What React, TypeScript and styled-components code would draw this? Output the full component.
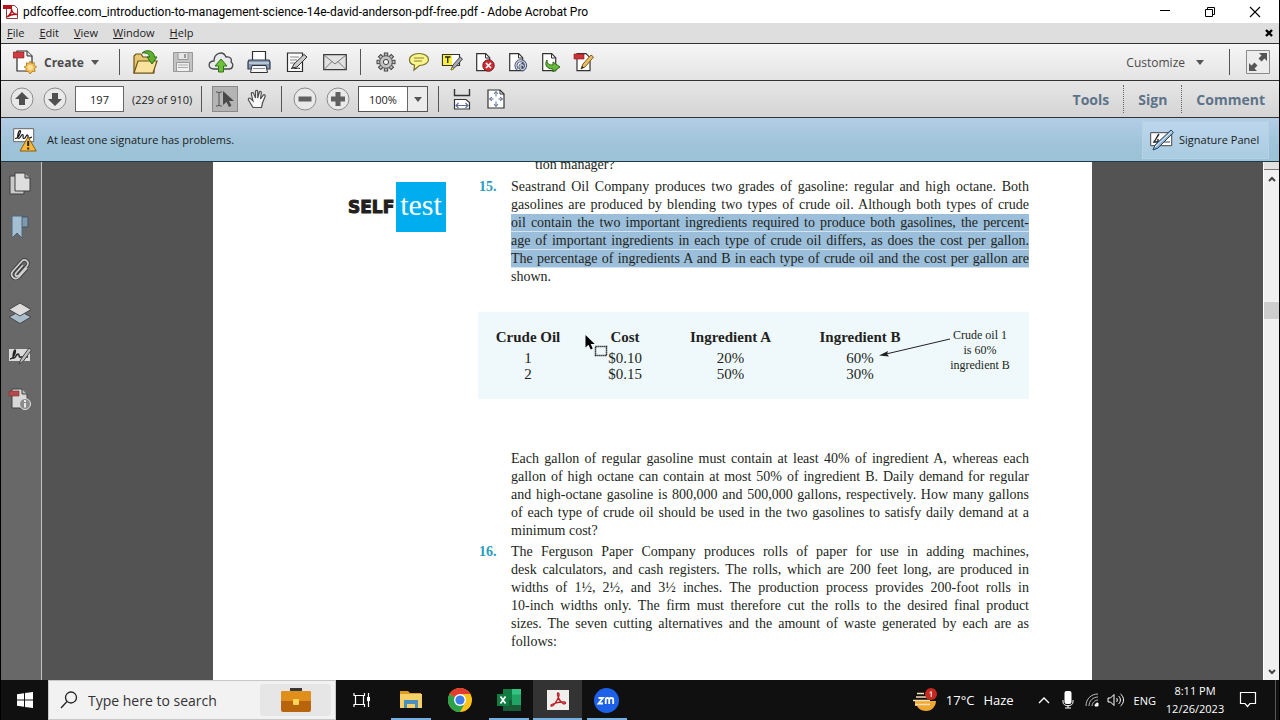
import React from "react";
import styled, { createGlobalStyle } from "styled-components";

const menus = ["File", "Edit", "View", "Window", "Help"];

const problem15 = [
  { text: "Seastrand Oil Company produces two grades of gasoline: regular and high octane. Both" },
  { text: "gasolines are produced by blending two types of crude oil. Although both types of crude" },
  { text: "oil contain the two important ingredients required to produce both gasolines, the percent-", selected: true },
  { text: "age of important ingredients in each type of crude oil differs, as does the cost per gallon.", selected: true },
  { text: "The percentage of ingredients A and B in each type of crude oil and the cost per gallon are", selected: true },
  { text: "shown.", last: true },
];

const problem15Question = [
  { text: "Each gallon of regular gasoline must contain at least 40% of ingredient A, whereas each" },
  { text: "gallon of high octane can contain at most 50% of ingredient B. Daily demand for regular" },
  { text: "and high-octane gasoline is 800,000 and 500,000 gallons, respectively. How many gallons" },
  { text: "of each type of crude oil should be used in the two gasolines to satisfy daily demand at a" },
  { text: "minimum cost?", last: true },
];

const problem16 = [
  { text: "The Ferguson Paper Company produces rolls of paper for use in adding machines," },
  { text: "desk calculators, and cash registers. The rolls, which are 200 feet long, are produced in" },
  { text: "widths of 1½, 2½, and 3½ inches. The production process provides 200-foot rolls in" },
  { text: "10-inch widths only. The firm must therefore cut the rolls to the desired final product" },
  { text: "sizes. The seven cutting alternatives and the amount of waste generated by each are as" },
  { text: "follows:", last: true },
];

const crudeOils = [
  ["1", "$0.10", "20%", "60%"],
  ["2", "$0.15", "50%", "30%"],
];

type LineData = { text: string; selected?: boolean; last?: boolean };

const Lines = ({ lines }: { lines: LineData[] }) => (
  <Paragraph>
    {lines.map((line) => (
      <Line key={line.text} $selected={line.selected} $last={line.last}>
        {line.text}{" "}
      </Line>
    ))}
  </Paragraph>
);

/* ---------- icons ---------- */

const PdfIcon = () => (
  <svg width="16" height="16" viewBox="0 0 16 16">
    <path d="M3.500 1.500h8l3 3v10h-11z" fill="#fff" stroke="#8a3a3a" />
    <path d="M0 1h9v4H0z" fill="#b5121b" />
    <path d="M4 13c3-2 5-5 4.500-8 0 3 3 6 6 5.500-4-.5-7 0-10.500 2.500z" fill="none" stroke="#b5121b" strokeWidth="1.500" />
  </svg>
);

const CreateIcon = () => (
  <svg width="24" height="24" viewBox="0 0 24 24">
    <path d="M4 1h10l5 5v15H4z" fill="#fff" stroke="#2b2b2b" strokeWidth="1.200" />
    <path d="M14 1v5h5" fill="#ddd" stroke="#2b2b2b" />
    <path d="M0 2h11v6H0z" fill="#cf3b40" stroke="#8d1c20" strokeWidth=".6" />
    <path d="M17 11l1.600 2.300 2.800-.6-.3 2.800 2.500 1.300-2.200 1.800.8 2.700-2.800.1L17 24l-1.700-2.500-2.800-.1.800-2.700-2.200-1.800 2.500-1.300-.3-2.800 2.800.6z" fill="#f3c15a" stroke="#a8741a" strokeWidth=".8" />
    <circle cx="17.200" cy="17.300" r="2.600" fill="#fbe09a" />
  </svg>
);

const FolderIcon = () => (
  <svg width="26" height="26" viewBox="0 0 26 26">
    <path d="M2 24V7l2-2h5l2 3h11v16z" fill="#e8c973" stroke="#6d5216" strokeWidth="1.200" />
    <path d="M2 24l4-12h19l-4 12z" fill="#f8e29c" stroke="#6d5216" strokeWidth="1.200" />
    <path d="M10 4c4-4 12-3 12.500 4H25l-5 7-5-7h2.500c0-3-3-4.500-7.500-4z" fill="#5eb130" stroke="#2f6b12" />
  </svg>
);

const SaveIcon = () => (
  <svg width="22" height="22" viewBox="0 0 22 22">
    <path d="M1.500 1.500h19v19h-19z" fill="#c4c4c4" stroke="#999" />
    <path d="M6 1.500h10v7H6z" fill="#e6e6e6" stroke="#999" />
    <path d="M12 3h2v4h-2z" fill="#999" />
    <path d="M4.500 11.500h13v9h-13z" fill="#efefef" stroke="#999" />
    <path d="M6 14h10M6 16.500h10" stroke="#aaa" />
  </svg>
);

const CloudIcon = () => (
  <svg width="26" height="24" viewBox="0 0 26 24">
    <path d="M6 19c-7 0-6-8 0-8C6 3 15 0 18 7c5-1 6 3 5 5 3 2 2 7-2 7z" fill="#e8eaec" stroke="#45494d" strokeWidth="1.300" />
    <path d="M13 9l6 7h-3.500v6h-5v-6H7z" fill="#6cc03a" stroke="#32731a" />
  </svg>
);

const PrinterIcon = () => (
  <svg width="24" height="24" viewBox="0 0 24 24">
    <path d="M5.500 1.500h13v10h-13z" fill="#fff" stroke="#303236" strokeWidth="1.200" />
    <path d="M2 10h20l1 2v7H1v-7z" fill="#8597ae" stroke="#2f3d50" strokeWidth="1.200" />
    <path d="M2 12h20v2H2z" fill="#b9c6d6" />
    <path d="M5 15.500h14l1.500 7h-17z" fill="#f5f5f5" stroke="#303236" />
    <path d="M6 18.500h12" stroke="#8a8d92" />
  </svg>
);

const EditPageIcon = () => (
  <svg width="22" height="22" viewBox="0 0 22 22">
    <path d="M1.500 2h15v18.500h-15z" fill="#fbfbfb" stroke="#2c2c2c" strokeWidth="1.200" />
    <path d="M4 6h9M4 9h7M4 12h5" stroke="#888" />
    <path d="M6 17l2-4L18 3.500l3 2.500L11 16z" fill="#ccc" stroke="#333" />
    <path d="M5 17.500c2-1 3 .5 5 0s2-.5 4 0" fill="none" stroke="#222" />
  </svg>
);

const MailIcon = () => (
  <svg width="24" height="18" viewBox="0 0 24 18">
    <path d="M.7 1.700h22.600v15H.7z" fill="#e2e2e2" stroke="#3b3b3b" strokeWidth="1.200" />
    <path d="M1 2l11 9L23 2M1 16.500l8-8M23 16.500l-8-8" fill="none" stroke="#777" />
  </svg>
);

const GearIcon = () => (
  <svg width="20" height="20" viewBox="0 0 20 20">
    <g stroke="#444" fill="#bbb">
      {[0, 45, 90, 135].map((a) => (
        <rect key={a} x="8.300" y="1" width="3.400" height="18" transform={`rotate(${a} 10 10)`} />
      ))}
    </g>
    <circle cx="10" cy="10" r="6.300" fill="#c4c4c4" stroke="#555" />
    <circle cx="10" cy="10" r="2.600" fill="#f4f4f4" stroke="#444" />
  </svg>
);

const CommentIcon = () => (
  <svg width="22" height="20" viewBox="0 0 22 20">
    <path d="M11 1.500c5.500 0 9.500 2.500 9.500 6s-4 6-9 6L6 18l.5-5C3 12.500 1.500 10 1.500 7.500c0-3.500 4-6 9.500-6z" fill="#fbf38c" stroke="#75702a" strokeWidth="1.200" />
    <path d="M6 6h10M6 9h8" stroke="#888238" />
  </svg>
);

const HighlightIcon = () => (
  <svg width="22" height="20" viewBox="0 0 22 20">
    <path d="M1.500 2.500h17v11h-17z" fill="#fff" stroke="#333" strokeWidth="1.200" />
    <path d="M2 3h9v10H2z" fill="#fbf03b" />
    <path d="M4 5h5.500M6.750 5v6" stroke="#222" strokeWidth="1.300" />
    <path d="M10 18l2-5 7-8 2.500 2-7 8z" fill="#a7aab0" stroke="#444" />
    <path d="M10 18l1-3 2 2z" fill="#f6ea2e" stroke="#6b6512" strokeWidth=".6" />
  </svg>
);

const sheet = <path d="M1.700 1.700h9l4 4v13h-13z" fill="#fff" stroke="#333" strokeWidth="1.200" />;
const sheetFold = <path d="M10.500 2v4h4" fill="none" stroke="#333" />;

const DeletePageIcon = () => (
  <svg width="20" height="20" viewBox="0 0 20 20">
    {sheet}
    {sheetFold}
    <circle cx="13.500" cy="13.500" r="5.700" fill="#cc2f35" stroke="#7c1216" />
    <path d="M11 11l5 5M16 11l-5 5" stroke="#fff" strokeWidth="1.700" />
  </svg>
);

const AttachPageIcon = () => (
  <svg width="20" height="20" viewBox="0 0 20 20" fill="none">
    {sheet}
    {sheetFold}
    <path d="M9.500 17.500c-4-6 1-9.500 4.500-8.500s5 5 2 8c-2 1.500-4 0-4-2s1.500-3 3-1.500" stroke="#48536e" strokeWidth="3" />
    <path d="M9.500 17.500c-4-6 1-9.500 4.500-8.500s5 5 2 8c-2 1.500-4 0-4-2s1.500-3 3-1.500" stroke="#c8d1e4" strokeWidth="1.300" />
  </svg>
);

const ExportPageIcon = () => (
  <svg width="20" height="20" viewBox="0 0 20 20">
    {sheet}
    {sheetFold}
    <path d="M6 8c0 4 2 5 6 5v-3l7 5-7 5v-3c-6 0-9-4-6-9z" fill="#67b83b" stroke="#2c6815" />
  </svg>
);

const EditPdfIcon = () => (
  <svg width="22" height="20" viewBox="0 0 22 20">
    <path d="M4 1.700h9l4 4v13H4z" fill="#fff" stroke="#333" strokeWidth="1.200" />
    <path d="M1 2h10v5H1z" fill="#cc3137" stroke="#86181c" strokeWidth=".6" />
    <path d="M8 17l2-5 8-9 2.500 2-8 9.500z" fill="#eebf62" stroke="#7c5a20" />
    <path d="M8 17l1-3 2 1.500z" fill="#222" />
  </svg>
);

const RoundIcon = ({ kind }: { kind: "up" | "down" | "minus" | "plus" }) => (
  <svg width="24" height="24" viewBox="0 0 24 24">
    <circle cx="12" cy="12" r="11" fill="#e9e9e9" stroke="#8c8c8c" />
    {kind === "up" && <path d="M12 5l7 7h-4v6H9v-6H5z" fill="#505050" />}
    {kind === "down" && <path d="M12 19l7-7h-4V6H9v6H5z" fill="#505050" />}
    {kind === "minus" && <path d="M5.500 9.500h13v5h-13z" fill="#606060" />}
    {kind === "plus" && <path d="M9.500 5h5v4.500H19v5h-4.500V19h-5v-4.500H5v-5h4.500z" fill="#606060" />}
  </svg>
);

const SelectToolIcon = () => (
  <svg width="20" height="18" viewBox="0 0 20 18">
    <path d="M1 2h2l1 1 1-1h2M4 3v12M1 16h2l1-1 1 1h2" fill="none" stroke="#555" />
    <path d="M8 1v14l3.500-3 2.500 5 2.500-1.300-2.500-4.700H19z" fill="#4a4a4a" />
  </svg>
);

const HandIcon = () => (
  <svg width="20" height="20" viewBox="0 0 20 20">
    <path
      d="M6 18.500L1.500 11c-.5-1.500 1-2.500 2-1.300L6 12 4.300 5c-.2-1.600 1.700-2 2.200-.6L8.500 9V2.500c0-1.500 2.200-1.500 2.200 0V9l1.600-5.700c.5-1.300 2.200-1 2 .6L13.500 10l2.700-3.800c1-1 2.500-.2 1.900 1.300L15.500 14l-1 4.500z"
      fill="#fafafa"
      stroke="#505050"
      strokeWidth="1.200"
    />
  </svg>
);

const FitWidthIcon = () => (
  <svg width="18" height="22" viewBox="0 0 18 22">
    <path d="M1.500 1v6.500h15V1" fill="none" stroke="#333" strokeWidth="1.400" />
    <path d="M1.500 21V11.500H13l3.500 3V21z" fill="#fff" stroke="#333" strokeWidth="1.200" />
    <path d="M3 17.500h12M5.500 15L3 17.500 5.500 20M12.500 15l2.500 2.500-2.500 2.500" fill="none" stroke="#5b6a96" strokeWidth="1.200" />
  </svg>
);

const FitPageIcon = () => (
  <svg width="18" height="20" viewBox="0 0 18 20">
    <path d="M1 1h12l4 4v14H1z" fill="#fff" stroke="#333" strokeWidth="1.200" />
    <path d="M13 1v4h4" fill="none" stroke="#333" />
    <path d="M9 2.500v5M9 12.500v5M2.500 10h4M11.500 10h4M7 5l2-2.500L11 5M7 15l2 2.500 2-2.500M5 8l-2.500 2L5 12M13 8l2.500 2-2.500 2" fill="none" stroke="#5b6a96" />
  </svg>
);

const ExpandIcon = () => (
  <svg width="24" height="24" viewBox="0 0 24 24">
    <path d="M.5.5h23v23H.5z" fill="#ececec" stroke="#8b8b8b" />
    <path d="M13 3h8v8l-2.500-2.500-3 3-3-3 3-3zM11 21H3v-8l2.500 2.500 3-3 3 3-3 3z" fill="#555" />
  </svg>
);

const SignatureWarnIcon = () => (
  <svg width="24" height="24" viewBox="0 0 24 24">
    <path d="M.7.700h20v13H.7z" fill="#fff" stroke="#666" />
    <path d="M2 10.500c4 0 6.500-8 5-8s-3.500 8-1.500 8 2.500-4 4-4-.5 4 1.500 4 2-4 3.500-3.500-.5 3 1.500 3 1.500-1 3-1" fill="none" stroke="#111" strokeWidth="1.200" />
    <path d="M15 9l8.300 14H7z" fill="#f6b93b" stroke="#8c5c0b" />
    <path d="M15.200 13v5M15.200 19.500v2" stroke="#222" strokeWidth="2" />
  </svg>
);

const SignaturePanelIcon = () => (
  <svg width="24" height="22" viewBox="0 0 24 22">
    <path d="M.7 3.700h21v13H.7z" fill="#fff" stroke="#444" />
    <path d="M9 5c-2 3-3 5-5 8h4v-3" fill="none" stroke="#222" strokeWidth="1.400" />
    <path d="M12 13h8" stroke="#444" />
    <path d="M3 21l2-5L21 1l2.500 2.500L8 19z" fill="#8fb2d0" stroke="#28435f" />
    <path d="M5 18L22 2.500" stroke="#eef5fb" />
  </svg>
);

const PagesIcon = () => (
  <svg width="22" height="24" viewBox="0 0 22 24">
    <path d="M1 4h14v18H1z" fill="#c9c9c9" stroke="#3f3f3f" />
    <path d="M6 1h10l5 5v13H6z" fill="#dedede" stroke="#3f3f3f" />
    <path d="M16 1v5h5" fill="#aaa" stroke="#3f3f3f" />
  </svg>
);

const BookmarkIcon = () => (
  <svg width="20" height="24" viewBox="0 0 20 24">
    <path d="M7 2h11v10H7z" fill="#7e99ae" stroke="#435566" />
    <path d="M2 1h10v22l-5-5-5 5z" fill="#a5bfd2" stroke="#4e6476" />
  </svg>
);

const ClipIcon = () => (
  <svg width="22" height="24" viewBox="0 0 22 24" fill="none">
    <path d="M14 7L7 15c-2 3 1 4 3 2l8-9c3-4-2-8-5-5l-9 10c-4 5 2 10 6 6l8-9" stroke="#414141" strokeWidth="3.500" />
    <path d="M14 7L7 15c-2 3 1 4 3 2l8-9c3-4-2-8-5-5l-9 10c-4 5 2 10 6 6l8-9" stroke="#cfcfcf" strokeWidth="1.700" />
  </svg>
);

const LayersIcon = () => (
  <svg width="24" height="22" viewBox="0 0 24 22">
    <path d="M12 9l11 6-11 6.500L1 15z" fill="#a9bcc9" stroke="#484848" />
    <path d="M12 1l11 6.500L12 14 1 7.500z" fill="#dcdcdc" stroke="#484848" />
  </svg>
);

const SignaturesIcon = () => (
  <svg width="24" height="20" viewBox="0 0 24 20">
    <path d="M1 3h21v12H1z" fill="#dadada" />
    <path d="M2 13c5-1 6-9 5-9s-3 8-1 8 2-4 4-4 0 4 3 3h7" fill="none" stroke="#222" strokeWidth="1.500" />
    <path d="M11 18l2-5 8-11 2.500 2-8 11z" fill="#bcbcbc" stroke="#444" />
  </svg>
);

const PdfInfoIcon = () => (
  <svg width="24" height="24" viewBox="0 0 24 24">
    <path d="M4 2h10l5 5v14H4z" fill="#d8d8d8" stroke="#414141" />
    <path d="M14 2v5h5" fill="#bbb" stroke="#414141" />
    <path d="M1 4h10v5H1z" fill="#b44a4a" stroke="#733" strokeWidth=".6" />
    <circle cx="17" cy="17" r="5.500" fill="#8b8b8b" stroke="#e0e0e0" />
    <path d="M17 13v2M17 16v4.500" stroke="#fff" strokeWidth="1.600" />
  </svg>
);

const Caret = () => (
  <svg width="8" height="5" viewBox="0 0 8 5">
    <path d="M0 0h8L4 5z" fill="#555" />
  </svg>
);

const MinimizeIcon = () => (
  <svg width="12" height="12" viewBox="0 0 12 12">
    <path d="M1 4.500h10" stroke="#000" />
  </svg>
);

const RestoreIcon = () => (
  <svg width="12" height="12" viewBox="0 0 12 12" fill="none" stroke="#000">
    <path d="M1.500 3.500h7v7h-7zM3.500 3V1.500h7v7H9" />
  </svg>
);

const CloseIcon = () => (
  <svg width="12" height="12" viewBox="0 0 12 12">
    <path d="M1 1l10 10M11 1L1 11" stroke="#000" strokeWidth="1.100" />
  </svg>
);

const CloseDocIcon = () => (
  <svg width="8" height="8" viewBox="0 0 8 8">
    <path d="M1 1l6 6M7 1L1 7" stroke="#000" strokeWidth="2.400" />
  </svg>
);

const WindowsIcon = () => (
  <svg width="16" height="16" viewBox="0 0 16 16" fill="#fff">
    <path d="M0 2.200l7-1v6.300H0zM8 1l8-1v7.500H8zM0 8.500h7v6.300l-7-1zM8 8.500h8V16l-8-1z" />
  </svg>
);

const SearchIcon = () => (
  <svg width="18" height="18" viewBox="0 0 18 18" fill="none" stroke="#222" strokeWidth="1.300">
    <circle cx="11" cy="6.500" r="5.500" />
    <path d="M7 10.500L1 17" />
  </svg>
);

const BriefcaseIcon = () => (
  <svg width="32" height="26" viewBox="0 0 32 26">
    <path d="M11.500 5V2.500h9V5" fill="none" stroke="#3a3a3a" strokeWidth="3" />
    <rect x="1" y="4" width="30" height="21" rx="2" fill="#b8640c" />
    <path d="M1 6c0-1 1-2 2-2h26c1 0 2 1 2 2v8H1z" fill="#e08f1c" />
    <rect x="13" y="12" width="6" height="6" rx="1" fill="#fcd45c" />
  </svg>
);

const TaskViewIcon = () => (
  <svg width="18" height="16" viewBox="0 0 18 16" fill="none" stroke="#fff" strokeWidth="1.200">
    <path d="M1 1v2.500h10.500V1M1 15v-2.500h10.500V15M2.500 3.500v9M10.500 3.500v9M15.500 1v14" />
    <path d="M14 5h3v4h-3z" fill="#fff" stroke="none" />
  </svg>
);

const ExplorerIcon = () => (
  <svg width="22" height="20" viewBox="0 0 22 20">
    <path d="M0 1h8l2 2h11v5H0z" fill="#dc9d1c" />
    <path d="M0 4h22v14H0z" fill="#f5cf68" />
    <path d="M4 10h14v8h-3v-4H7v4H4z" fill="#4c8fbd" />
  </svg>
);

const ChromeIcon = () => (
  <svg width="24" height="24" viewBox="0 0 24 24">
    <circle cx="12" cy="12" r="12" fill="#fbc116" />
    <path d="M12 12L1.600 6A12 12 0 0 0 12 24l5-9z" fill="#2da24c" />
    <path d="M12 12L1.600 6A12 12 0 0 1 22.400 6H12z" fill="#e33b2e" />
    <circle cx="12" cy="12" r="6" fill="#fff" />
    <circle cx="12" cy="12" r="4.600" fill="#3f7de8" />
  </svg>
);

const ExcelIcon = () => (
  <svg width="24" height="22" viewBox="0 0 24 22">
    <path d="M6 0h18v22H6z" fill="#21a366" />
    <path d="M6 0h9v11H6z" fill="#107c41" />
    <path d="M15 0h9v5.500h-9z" fill="#33c481" />
    <path d="M6 11h9v5H6zM6 16h18v6H6z" fill="#185c37" />
    <path d="M0 5h12v12H0z" fill="#107c41" />
    <path d="M3.500 7.500l5 7M8.500 7.500l-5 7" stroke="#fff" strokeWidth="1.700" />
  </svg>
);

const AcrobatIcon = () => (
  <svg width="22" height="20" viewBox="0 0 22 20">
    <path d="M0 0h22v20H0z" fill="#f1eeee" />
    <path d="M4 16c-1-2 7-4 13-4 3 0 1 3-1 1.500C12 11 10 5 10.500 3.500s2 0 1.500 2C11 10 6 17 4 16z" fill="none" stroke="#b81a20" strokeWidth="1.300" />
  </svg>
);

const ZoomIcon = () => (
  <svg width="25" height="25" viewBox="0 0 25 25">
    <circle cx="12.500" cy="12.500" r="12.500" fill="#1d61e8" />
    <path d="M4.500 10h4.500l-4.500 5.500H9M11.700 16v-4.500c0-2 3.500-2 3.500 0V16v-4.500c0-2 4-2 4 0V16" fill="none" stroke="#fff" strokeWidth="1.800" />
  </svg>
);

const HazeIcon = () => (
  <svg width="24" height="24" viewBox="0 0 24 24">
    <path d="M2 13h21c0 5-4 10-10 10-5 0-8-3-9-5h-2z" fill="#f0a732" />
    <path d="M4 5.500h7M3 9h11M0 12.500h17M2 16.500h15" stroke="#f5ddb4" strokeWidth="1.500" />
    <circle cx="18" cy="6" r="6" fill="#c4281f" />
    <path d="M16.500 5l1.700-1.500V9" fill="none" stroke="#fff" />
  </svg>
);

const ChevronUpIcon = () => (
  <svg width="12" height="8" viewBox="0 0 12 8">
    <path d="M1 7l5-5 5 5" fill="none" stroke="#fff" strokeWidth="1.300" />
  </svg>
);

const MicIcon = () => (
  <svg width="12" height="18" viewBox="0 0 12 18">
    <rect x="2.500" y="0" width="7" height="13" rx="2" fill="#fff" />
    <path d="M1 9v2c0 5 10 5 10 0V9M6 14v3M3 17h6" fill="none" stroke="#fff" />
  </svg>
);

const WifiIcon = () => (
  <svg width="14" height="14" viewBox="0 0 14 14" fill="none" stroke="#bbb">
    <path d="M1 13C1 6 6 1 13 1M4 13c0-5 4-9 9-9M7 13c0-3 3-6 6-6" />
    <path d="M10 13c0-2 1-3 3-3v3z" fill="#fff" stroke="#fff" />
  </svg>
);

const SoundIcon = () => (
  <svg width="18" height="14" viewBox="0 0 18 14" fill="none" stroke="#fff">
    <path d="M1 5h2.500L7 1.500v11L3.500 9H1zM9.500 5c1 1 1 3 0 4M11.500 3c2.500 2 2.500 6 0 8M13.500 1c4 3 4 9 0 12" />
  </svg>
);

const NoticeIcon = () => (
  <svg width="18" height="18" viewBox="0 0 18 18">
    <path d="M1.500 1.500h15v11H11l-2.500 3-2.500-3H1.500z" fill="none" stroke="#fff" strokeWidth="1.200" />
  </svg>
);

const ScrollChevron = ({ down }: { down?: boolean }) => (
  <svg width="8" height="6" viewBox="0 0 8 6">
    <path d={down ? "M1 1l3 3 3-3" : "M1 5l3-3 3 3"} fill="none" stroke="#444" strokeWidth="2" />
  </svg>
);

/* ---------- page ---------- */

const App = () => {
  return (
    <>
      <GlobalStyle />
      <Screen>
        <TitleBar>
          <PdfIcon />
          <Title>
            pdfcoffee.com_introduction-to-management-science-14e-david-anderson-pdf-free.pdf - Adobe Acrobat Pro
          </Title>
          <WindowButton aria-label="Minimize"><MinimizeIcon /></WindowButton>
          <WindowButton aria-label="Restore"><RestoreIcon /></WindowButton>
          <WindowButton aria-label="Close"><CloseIcon /></WindowButton>
        </TitleBar>

        <MenuBar>
          {menus.map((menu) => (
            <MenuButton key={menu}>
              <u>{menu[0]}</u>
              {menu.slice(1)}
            </MenuButton>
          ))}
          <Spacer />
          <CloseDocument aria-label="Close document"><CloseDocIcon /></CloseDocument>
        </MenuBar>

        <MainToolbar>
          <CreateButton>
            <CreateIcon />
            Create
            <Caret />
          </CreateButton>
          <Separator />
          <IconButton $width={38} aria-label="Open"><FolderIcon /></IconButton>
          <IconButton $width={38} aria-label="Save"><SaveIcon /></IconButton>
          <IconButton $width={38} aria-label="Upload"><CloudIcon /></IconButton>
          <IconButton $width={38} aria-label="Print"><PrinterIcon /></IconButton>
          <IconButton $width={38} aria-label="Edit"><EditPageIcon /></IconButton>
          <IconButton $width={38} aria-label="Mail"><MailIcon /></IconButton>
          <Separator />
          <QuickTools>
            <IconButton $width={33} aria-label="Settings"><GearIcon /></IconButton>
            <IconButton $width={33} aria-label="Add note"><CommentIcon /></IconButton>
            <IconButton $width={33} aria-label="Highlight text"><HighlightIcon /></IconButton>
            <IconButton $width={33} aria-label="Delete page"><DeletePageIcon /></IconButton>
            <IconButton $width={33} aria-label="Attach file"><AttachPageIcon /></IconButton>
            <IconButton $width={33} aria-label="Export page"><ExportPageIcon /></IconButton>
            <IconButton $width={33} aria-label="Edit PDF"><EditPdfIcon /></IconButton>
          </QuickTools>
          <Spacer />
          <CustomizeButton>
            Customize
            <Caret />
          </CustomizeButton>
          <Separator />
          <IconButton $width={43} aria-label="Reading mode"><ExpandIcon /></IconButton>
        </MainToolbar>

        <NavToolbar>
          <IconButton $width={33} aria-label="Previous page"><RoundIcon kind="up" /></IconButton>
          <IconButton $width={33} aria-label="Next page"><RoundIcon kind="down" /></IconButton>
          <PageInput aria-label="Page number" defaultValue="197" />
          <PageCount>(229 of 910)</PageCount>
          <Separator />
          <ToolButton aria-label="Select"><SelectToolIcon /></ToolButton>
          <IconButton $width={37} aria-label="Hand"><HandIcon /></IconButton>
          <Separator />
          <IconButton $width={33} aria-label="Zoom out"><RoundIcon kind="minus" /></IconButton>
          <IconButton $width={33} aria-label="Zoom in"><RoundIcon kind="plus" /></IconButton>
          <ZoomField>
            <ZoomSelect aria-label="Zoom level" defaultValue="100%">
              <option>100%</option>
            </ZoomSelect>
            <ZoomArrow><Caret /></ZoomArrow>
          </ZoomField>
          <Separator />
          <IconButton $width={34} aria-label="Fit width"><FitWidthIcon /></IconButton>
          <IconButton $width={34} aria-label="Fit page"><FitPageIcon /></IconButton>
          <Spacer />
          <PanelButton>Tools</PanelButton>
          <PanelButton>Sign</PanelButton>
          <PanelButton>Comment</PanelButton>
        </NavToolbar>

        <SignatureBar>
          <SignatureWarnIcon />
          <SignatureText>At least one signature has problems.</SignatureText>
          <SignatureButton>
            <SignaturePanelIcon />
            Signature Panel
          </SignatureButton>
        </SignatureBar>

        <Workspace>
          <SideNav>
            <SideButton aria-label="Pages"><PagesIcon /></SideButton>
            <SideButton aria-label="Bookmarks"><BookmarkIcon /></SideButton>
            <SideButton aria-label="Attachments"><ClipIcon /></SideButton>
            <SideButton aria-label="Layers"><LayersIcon /></SideButton>
            <SideButton aria-label="Signatures"><SignaturesIcon /></SideButton>
            <SideButton aria-label="Standards"><PdfInfoIcon /></SideButton>
          </SideNav>

          <Viewer>
            <Page>
              <Aside>
                <SelfTest>
                  <SelfWord>SELF</SelfWord>
                  <TestWord>test</TestWord>
                </SelfTest>
              </Aside>
              <Content>
                <CutLine>tion manager?</CutLine>
                <Problem>
                  <Number>15.</Number>
                  <Lines lines={problem15} />
                </Problem>
                <DataPanel>
                  <DataTable>
                    <colgroup>
                      <Col $width={100} />
                      <Col $width={94} />
                      <Col $width={117} />
                      <Col $width={142} />
                    </colgroup>
                    <thead>
                      <tr>
                        <th>Crude Oil</th>
                        <th>Cost</th>
                        <th>Ingredient A</th>
                        <th>Ingredient B</th>
                      </tr>
                    </thead>
                    <tbody>
                      {crudeOils.map((row) => (
                        <tr key={row[0]}>
                          {row.map((cell) => (
                            <td key={cell}>{cell}</td>
                          ))}
                        </tr>
                      ))}
                    </tbody>
                  </DataTable>
                  <Note>
                    Crude oil 1
                    <br />
                    is 60%
                    <br />
                    ingredient B
                  </Note>
                  <NoteArrow width="74" height="22" viewBox="0 0 74 22">
                    <path d="M72 2L8 17" stroke="#222" />
                    <path d="M1 18.500l9-4.500-1 3 2 2.500z" fill="#222" />
                  </NoteArrow>
                  <Pointer width="24" height="24" viewBox="0 0 24 24">
                    <path d="M.5 0v12.500l3-2.800 2.200 4.800 2-1-2-4.500h4z" fill="#000" />
                    <path d="M10.500 11.500h11v9h-11z" fill="none" stroke="#000" strokeWidth="1.500" strokeDasharray="1.200 .8" />
                  </Pointer>
                </DataPanel>
                <Problem>
                  <Number />
                  <Lines lines={problem15Question} />
                </Problem>
                <Problem $gap={3}>
                  <Number>16.</Number>
                  <Lines lines={problem16} />
                </Problem>
              </Content>
            </Page>
          </Viewer>

          <ScrollBar>
            <ScrollSplit />
            <ScrollButton aria-label="Scroll up"><ScrollChevron /></ScrollButton>
            <ScrollTrack>
              <ScrollThumb />
            </ScrollTrack>
            <ScrollButton aria-label="Scroll down"><ScrollChevron down /></ScrollButton>
          </ScrollBar>
        </Workspace>

        <Taskbar>
          <StartButton aria-label="Start"><WindowsIcon /></StartButton>
          <SearchBox>
            <SearchIcon />
            <SearchInput aria-label="Search" placeholder="Type here to search" />
            <SearchHighlight aria-label="Search highlights"><BriefcaseIcon /></SearchHighlight>
          </SearchBox>
          <TaskButton aria-label="Task view"><TaskViewIcon /></TaskButton>
          <TaskButton $open aria-label="File Explorer"><ExplorerIcon /></TaskButton>
          <TaskButton aria-label="Chrome"><ChromeIcon /></TaskButton>
          <TaskButton $open aria-label="Excel"><ExcelIcon /></TaskButton>
          <TaskButton $open $active aria-label="Acrobat"><AcrobatIcon /></TaskButton>
          <TaskButton $open aria-label="Zoom"><ZoomIcon /></TaskButton>
          <Spacer />
          <Weather>
            <HazeIcon />
            <span>17°C</span>
            <span>Haze</span>
          </Weather>
          <TrayButton aria-label="Hidden icons"><ChevronUpIcon /></TrayButton>
          <TrayButton aria-label="Microphone"><MicIcon /></TrayButton>
          <TrayButton aria-label="Network"><WifiIcon /></TrayButton>
          <TrayButton aria-label="Volume"><SoundIcon /></TrayButton>
          <Language>ENG</Language>
          <Clock>
            <span>8:11 PM</span>
            <span>12/26/2023</span>
          </Clock>
          <NoticeButton aria-label="Notifications"><NoticeIcon /></NoticeButton>
          <ShowDesktop aria-label="Show desktop" />
        </Taskbar>
      </Screen>
    </>
  );
};

export default App;

const GlobalStyle = createGlobalStyle`
  * {
    box-sizing: border-box;
  }

  body {
    margin: 0;
    background-color: #000;
    font-family: "Open Sans", "Noto Sans", sans-serif;
    font-size: 11px;
    color: #1c1c1c;
  }

  button,
  input,
  select {
    margin: 0;
    padding: 0;
    border: none;
    background: none;
    font: inherit;
    color: inherit;
  }

  svg {
    display: block;
    flex: none;
  }
`;

const Screen = styled.div`
  display: flex;
  flex-direction: column;
  height: 100vh;
  border-left: 1px solid #000;
  border-right: 1px solid #000;
`;

const Spacer = styled.div`
  flex: 1;
`;

const TitleBar = styled.header`
  display: flex;
  align-items: center;
  flex: none;
  height: 23px;
  padding: 0 2px;
  background-color: #fff;
`;

const Title = styled.span`
  flex: 1;
  padding-left: 4px;
  font-family: Roboto, "Open Sans", sans-serif;
  font-size: 12px;
  color: #000;
  white-space: nowrap;
`;

const WindowButton = styled.button`
  display: flex;
  align-items: center;
  justify-content: center;
  width: 45px;
  height: 20px;
`;

const MenuBar = styled.nav`
  display: flex;
  align-items: center;
  flex: none;
  gap: 15px;
  height: 21px;
  padding: 0 6px;
  background-color: #dedede;
  border-bottom: 1px solid #333;
`;

const MenuButton = styled.button`
  line-height: 18px;
`;

const CloseDocument = styled.button`
  display: flex;
`;

const Toolbar = styled.div`
  display: flex;
  align-items: center;
  flex: none;
  height: 37px;
  border-bottom: 1px solid #333;
`;

const MainToolbar = styled(Toolbar)`
  padding-left: 12px;
  background-image: linear-gradient(#f6f6f6, #e4e4e4);
`;

const NavToolbar = styled(Toolbar)`
  padding-left: 4px;
  background-image: linear-gradient(#e6e6e6, #d4d4d4);
`;

const Separator = styled.div`
  flex: none;
  width: 1px;
  height: 26px;
  margin: 0 6px;
  background-color: #555;
`;

const QuickTools = styled.div`
  display: flex;
  padding-left: 2px;
`;

const IconButton = styled.button<{ $width: number }>`
  display: flex;
  align-items: center;
  justify-content: center;
  flex: none;
  width: ${({ $width }) => $width}px;
  height: 30px;
`;

const CreateButton = styled.button`
  display: flex;
  align-items: center;
  gap: 7px;
  width: 100px;
  font-size: 12px;
  font-weight: 700;
  color: #4b4b4b;
`;

const CustomizeButton = styled.button`
  display: flex;
  align-items: center;
  gap: 11px;
  margin-right: 19px;
  font-size: 12px;
  color: #4b4b4b;
`;

const PageInput = styled.input`
  width: 49px;
  height: 26px;
  margin-left: 4px;
  border: 1px solid #666;
  background-color: #fff;
  text-align: center;
`;

const PageCount = styled.span`
  width: 63px;
  margin-left: 8px;
  white-space: nowrap;
`;

const ToolButton = styled.button`
  display: flex;
  align-items: center;
  justify-content: center;
  width: 26px;
  height: 26px;
  margin-left: 4px;
  border: 1px solid #8a8a8a;
  background-color: #b4b4b4;
`;

const ZoomField = styled.div`
  display: grid;
  grid-template-columns: 48px 20px;
  align-items: center;
  width: 70px;
  height: 26px;
  margin: 0 4px;
  border: 1px solid #555;
  background-color: #fff;
`;

const ZoomSelect = styled.select`
  grid-area: 1 / 1 / 2 / 3;
  width: 100%;
  height: 100%;
  padding-left: 10px;
  appearance: none;
`;

const ZoomArrow = styled.span`
  display: flex;
  grid-area: 1 / 2 / 2 / 3;
  align-items: center;
  justify-content: center;
  height: 100%;
  border-left: 1px solid #666;
  background-color: #ececec;
  pointer-events: none;
`;

const PanelButton = styled.button`
  height: 28px;
  padding: 0 14px;
  border-left: 1px dotted #666;
  font-size: 14px;
  font-weight: 700;
  color: #5d7389;

  ${Spacer} + & {
    border-left: none;
  }
`;

const SignatureBar = styled.div`
  display: flex;
  align-items: center;
  flex: none;
  height: 44px;
  padding: 0 10px 0 12px;
  border-bottom: 1px solid #1f3c4a;
  background-image: linear-gradient(#b3cde6, #9fc4d9 60%, #9cc2d6);
`;

const SignatureText = styled.span`
  flex: 1;
  padding-left: 10px;
`;

const SignatureButton = styled.button`
  display: flex;
  align-items: center;
  gap: 5px;
  width: 127px;
  height: 38px;
  padding-left: 7px;
  border: 1px solid #b4d2e4;
  background-image: linear-gradient(#bcd6ec, #a9cce0);
  white-space: nowrap;
`;

const Workspace = styled.div`
  display: flex;
  flex: 1;
  min-height: 0;
`;

const SideNav = styled.nav`
  flex: none;
  width: 41px;
  border-right: 1px solid #c4c4c4;
  background-color: #686868;
`;

const SideButton = styled.button`
  display: flex;
  align-items: center;
  justify-content: center;
  width: 37px;
  height: 43px;
`;

const Viewer = styled.main`
  display: flex;
  justify-content: center;
  flex: 1;
  overflow: hidden;
  background-color: #535353;
`;

const Page = styled.article`
  display: flex;
  width: 879px;
  padding: 0 63px 0 135px;
  background-color: #fff;
  font-family: "Liberation Serif", serif;
  font-size: 14px;
  line-height: 18px;
  color: #231f20;
`;

const Aside = styled.aside`
  flex: none;
  width: 130px;
  padding-top: 20px;
`;

const SelfTest = styled.div`
  display: flex;
  align-items: center;
`;

const SelfWord = styled.span`
  width: 48px;
  font-family: "DejaVu Sans", sans-serif;
  font-size: 17px;
  font-weight: 700;
  -webkit-text-stroke: 1px #231f20;
`;

const TestWord = styled.span`
  width: 50px;
  height: 50px;
  background-color: #00aeef;
  font-size: 30px;
  line-height: 46px;
  text-align: center;
  color: #fff;
`;

const Content = styled.div`
  flex: none;
  width: 551px;
`;

const CutLine = styled.p`
  margin: -6px 0 4px;
  padding-left: 57px;
`;

const Problem = styled.section<{ $gap?: number }>`
  display: grid;
  grid-template-columns: 33px 518px;
  margin-top: ${({ $gap = 0 }) => $gap}px;
`;

const Number = styled.b`
  padding-left: 1px;
  color: #2a9cc0;
`;

const Paragraph = styled.p`
  margin: 0;
`;

const Line = styled.span<{ $selected?: boolean; $last?: boolean }>`
  display: block;
  border-bottom: ${({ $selected }) => ($selected ? "1px solid #d3e4f0" : "none")};
  line-height: ${({ $selected }) => ($selected ? 17 : 18)}px;
  background-color: ${({ $selected }) => ($selected ? "#9bbfdb" : "transparent")};
  text-align-last: ${({ $last }) => ($last ? "left" : "justify")};
  white-space: nowrap;
`;

const DataPanel = styled.div`
  position: relative;
  display: flex;
  height: 87px;
  margin: 26px 0 51px;
  padding-top: 16px;
  background-color: #eff9fc;
`;

const DataTable = styled.table`
  width: 453px;
  height: 54px;
  border-collapse: collapse;
  table-layout: fixed;
  font-size: 15px;
  text-align: center;

  th,
  td {
    padding: 0;
    line-height: 16px;
  }

  th {
    height: 22px;
    padding-bottom: 4px;
  }
`;

const Col = styled.col<{ $width: number }>`
  width: ${({ $width }) => $width}px;
`;

const Note = styled.div`
  flex: 1;
  font-size: 12px;
  line-height: 15px;
  text-align: center;
`;

const NoteArrow = styled.svg`
  position: absolute;
  top: 25px;
  left: 400px;
`;

const Pointer = styled.svg`
  position: absolute;
  top: 23px;
  left: 107px;
`;

const ScrollBar = styled.div`
  display: flex;
  flex-direction: column;
  flex: none;
  width: 16px;
  border-left: 1px solid #fff;
  background-color: #f0f0f0;
`;

const ScrollSplit = styled.div`
  height: 8px;
  border-bottom: 1px solid #777;
  background-color: #e4e0e0;
`;

const ScrollButton = styled.button`
  display: flex;
  align-items: center;
  justify-content: center;
  height: 17px;
`;

const ScrollTrack = styled.div`
  flex: 1;
  padding-top: 115px;
`;

const ScrollThumb = styled.div`
  height: 17px;
  background-color: #cdcdcd;
`;

const Taskbar = styled.footer`
  display: flex;
  align-items: stretch;
  flex: none;
  height: 40px;
  background-color: #101010;
  color: #fff;
`;

const StartButton = styled.button`
  display: flex;
  align-items: center;
  justify-content: center;
  width: 47px;
`;

const SearchBox = styled.div`
  display: flex;
  align-items: center;
  width: 288px;
  margin-right: 1px;
  padding: 0 4px 0 11px;
  border: 1px solid #c8c8c8;
  background-color: #f2f2f2;
`;

const SearchInput = styled.input`
  flex: 1;
  min-width: 0;
  padding-left: 10px;
  font-size: 14px;
  color: #222;

  &::placeholder {
    color: #333;
    opacity: 1;
  }
`;

const SearchHighlight = styled.button`
  display: flex;
  align-items: center;
  justify-content: center;
  width: 71px;
  height: 32px;
  border-radius: 4px;
  background-color: #e6e6e6;
`;

const TaskButton = styled.button<{ $open?: boolean; $active?: boolean }>`
  display: flex;
  align-items: center;
  justify-content: center;
  width: 49px;
  background-color: ${({ $active }) => ($active ? "#333" : "transparent")};
  background-image: ${({ $open }) => ($open ? "linear-gradient(#76b0e0, #76b0e0)" : "none")};
  background-position: center bottom;
  background-repeat: no-repeat;
  background-size: ${({ $active }) => ($active ? 49 : 40)}px 2px;
`;

const Weather = styled.div`
  display: flex;
  align-items: center;
  gap: 9px;
  margin-right: 18px;
  font-size: 13px;
`;

const TrayButton = styled.button`
  display: flex;
  align-items: center;
  justify-content: center;
  width: 24px;
`;

const Language = styled.span`
  align-self: center;
  margin-left: 6px;
`;

const Clock = styled.time`
  display: flex;
  flex-direction: column;
  align-items: center;
  justify-content: center;
  width: 78px;
  line-height: 18px;
`;

const NoticeButton = styled.button`
  display: flex;
  align-items: center;
  justify-content: center;
  width: 28px;
`;

const ShowDesktop = styled.button`
  width: 4px;
  margin-left: 13px;
  border-left: 1px solid #555;
`;
